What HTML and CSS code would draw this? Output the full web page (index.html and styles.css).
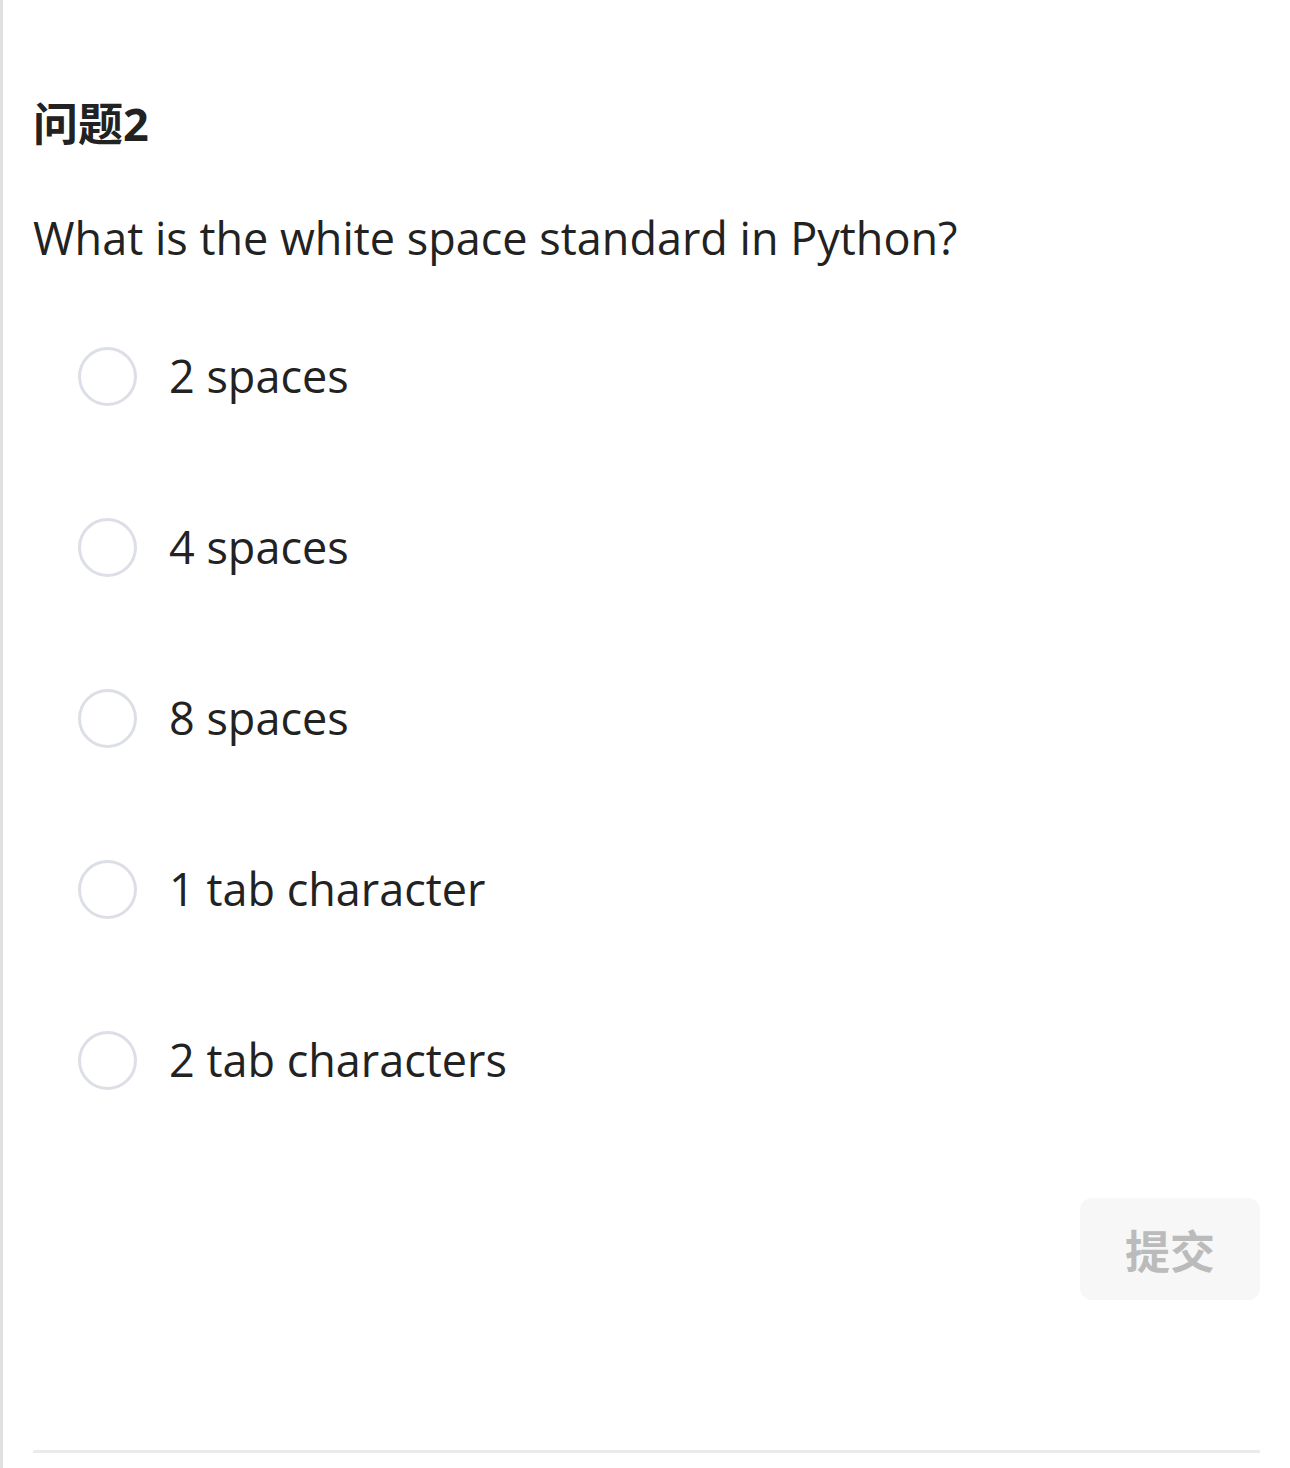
FILE: index.html
```html
<!DOCTYPE html>
<html lang="zh">
<head>
<meta charset="utf-8">
<link rel="stylesheet" href="styles.css">
</head>
<body>
<div class="page">
  <h2 class="title">问题2</h2>
  <p class="question">What is the white space standard in Python?</p>
  <ul class="options">
    <li class="option"><span class="radio"></span><span class="label">2 spaces</span></li>
    <li class="option"><span class="radio"></span><span class="label">4 spaces</span></li>
    <li class="option"><span class="radio"></span><span class="label">8 spaces</span></li>
    <li class="option"><span class="radio"></span><span class="label">1 tab character</span></li>
    <li class="option"><span class="radio"></span><span class="label">2 tab characters</span></li>
  </ul>
  <div class="actions">
    <button class="submit" disabled>提交</button>
  </div>
  <div class="divider"></div>
</div>
</body>
</html>
```
FILE: styles.css
```css
html, body {
  margin: 0;
  padding: 0;
  background: #fff;
}
body {
  font-family: "Open Sans", "Noto Sans CJK SC", sans-serif;
  color: #222;
}
.page {
  border-left: 3px solid #e0e0e0;
  min-height: 1468px;
  box-sizing: border-box;
  padding: 92px 30px 0 30px;
}
.title {
  margin: 0;
  font-family: "Open Sans", "Noto Sans CJK SC", sans-serif;
  font-size: 45px;
  font-weight: 700;
  line-height: 64px;
  color: #222;
}
.question {
  margin: 50px 0 0 0;
  font-size: 45px;
  line-height: 64px;
  font-weight: 400;
}
.options {
  list-style: none;
  margin: 74px 0 0 0;
  padding: 0 0 0 45px;
}
.option {
  display: flex;
  align-items: center;
  height: 64px;
  margin-bottom: 107px;
}
.option:last-child {
  margin-bottom: 0;
}
.radio {
  width: 53px;
  height: 53px;
  border: 3px solid #dcdfe6;
  border-radius: 50%;
  flex: none;
  box-sizing: content-box;
}
.label {
  margin-left: 32px;
  font-size: 45px;
  line-height: 64px;
}
.actions {
  display: flex;
  justify-content: flex-end;
  margin-top: 106px;
}
.submit {
  width: 180px;
  height: 102px;
  border: none;
  border-radius: 12px;
  background: #f7f7f7;
  color: #bbbbbb;
  font-family: "Noto Sans CJK SC", sans-serif;
  font-size: 45px;
  font-weight: 700;
  padding: 0;
}
.divider {
  margin-top: 150px;
  height: 3px;
  background: #ebebeb;
}
```
